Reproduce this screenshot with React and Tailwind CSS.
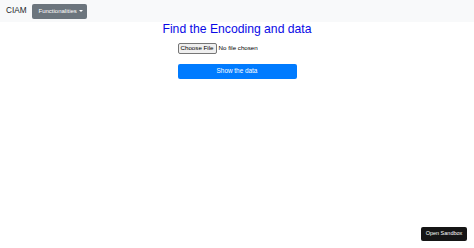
import React from 'react';

const App = () => {
    return (
        <div className="relative w-[474px] h-[248px] bg-white overflow-hidden" style={{ fontFamily: '"Liberation Sans", Arial, sans-serif' }}>
            {/* Navbar */}
            <nav className="h-[22px] bg-[#f8f9fa] flex items-center pl-[6px]">
                <span className="text-[8.2px] text-[#212529] leading-none">CIAM</span>
                <button className="ml-[6px] h-[15px] w-[55px] pl-[6px] bg-[#6c757d] rounded-[2px] text-white text-[6px] flex items-center gap-[2px] leading-none">
                    Functionalities
                    <span className="inline-block w-0 h-0 border-l-[2px] border-r-[2px] border-t-[2px] border-l-transparent border-r-transparent border-t-white" />
                </button>
            </nav>

            {/* Content */}
            <div className="flex flex-col items-center">
                <h2 className="text-[12.2px] leading-[14px] text-[#0a0ae6]">Find the Encoding and data</h2>
                <div className="w-[119px] flex flex-col">
                    <div className="flex items-center mt-[7px] h-[11px]">
                        <span className="h-[11px] px-[2px] border border-[#767676] rounded-[2px] bg-[#efefef] text-[6.2px] text-black flex items-center leading-none">Choose File</span>
                        <span className="ml-[2px] text-[6.2px] text-black leading-none">No file chosen</span>
                    </div>
                    <button className="mt-[10px] h-[15px] w-[119px] bg-[#007bff] rounded-[2px] text-white text-[6.4px] leading-none">Show the data</button>
                </div>
            </div>

            {/* Overlay */}
            <button className="absolute left-[421px] top-[227px] w-[46px] h-[14px] bg-[#151515] rounded-[2px] text-white text-[5.5px] leading-none">Open Sandbox</button>
        </div>
    );
};

export default App;
